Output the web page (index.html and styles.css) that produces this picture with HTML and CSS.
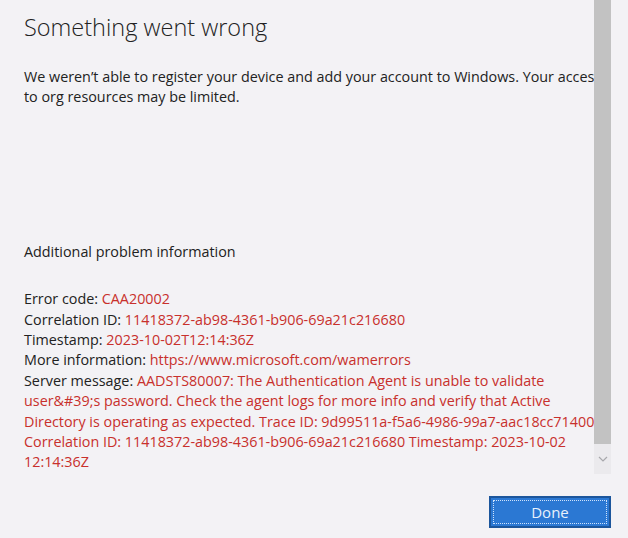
FILE: index.html
```html
<!DOCTYPE html>
<html lang="en">
  <head>
    <meta charset="UTF-8" />
    <meta name="viewport" content="width=device-width, initial-scale=1.0" />
    <title>Something went wrong</title>
    <link rel="stylesheet" href="styles.css">
  </head>
  <body>
    <div class="dialog">
      <div class="scroll-area">
        <div class="content">
          <h1 class="title">Something went wrong</h1>
          <p class="message">
            We weren’t able to register your device and add your account to Windows. Your access<br />
            to org resources may be limited.
          </p>

          <p class="section-title">Additional problem information</p>

          <div class="details">
            <div>Error code: <span class="value">CAA20002</span></div>
            <div>Correlation ID: <span class="value">11418372-ab98-4361-b906-69a21c216680</span></div>
            <div>Timestamp: <span class="value">2023-10-02T12:14:36Z</span></div>
            <div>More information: <span class="value">https://www.microsoft.com/wamerrors</span></div>
            <div>Server message: <span class="value">AADSTS80007: The Authentication Agent is unable to validate<br />
              user&amp;#39;s password. Check the agent logs for more info and verify that Active<br />
              Directory is operating as expected. Trace ID: 9d99511a-f5a6-4986-99a7-aac18cc71400<br />
              Correlation ID: 11418372-ab98-4361-b906-69a21c216680 Timestamp: 2023-10-02<br />
              12:14:36Z</span></div>
          </div>
        </div>

        <!-- fake scrollbar, sits over the text like the real one -->
        <div class="scrollbar">
          <div class="thumb"></div>
          <div class="arrow">
            <svg width="10" height="6" viewBox="0 0 10 6">
              <path d="M1 1 L5 5 L9 1" fill="none" stroke="#a8a8ac" stroke-width="1.2" />
            </svg>
          </div>
        </div>
      </div>

      <div class="footer">
        <button class="done-btn">Done</button>
      </div>
    </div>
  </body>
</html>
```

FILE: styles.css
```css
body {
  margin: 0;
  background: #f3f2f5;
  font-family: "Open Sans", "Noto Sans", sans-serif;
  color: #222222;
}

.dialog {
  width: 628px;
  height: 538px;
}

.scroll-area {
  position: relative;
  height: 474px;
  overflow: hidden;
}

.content {
  padding: 10px 0 0 24px;
  font-size: 14.35px;
  line-height: 20.4px;
  white-space: nowrap;
}

.title {
  font-size: 23.5px;
  font-weight: 300;
  line-height: 34px;
  margin: 0 0 23px 0;
}

.message {
  margin: 0;
}

.section-title {
  margin: 134px 0 0 0;
}

.details {
  margin-top: 27px;
}

.value {
  color: #c8302c;
}

.scrollbar {
  position: absolute;
  top: 0;
  left: 594px;
  width: 17px;
  height: 474px;
  background: #ebeaed;
  display: flex;
  flex-direction: column;
}

.thumb {
  height: 444px;
  background: #c2c2c2;
}

.arrow {
  flex: 1;
  display: flex;
  align-items: center;
  justify-content: center;
}

.footer {
  display: flex;
  justify-content: flex-end;
  padding: 22px 17px 0 0;
}

.done-btn {
  width: 122px;
  height: 32px;
  background: #2b78d3;
  border: 2px solid #1c569c;
  outline: 1px dotted #cfe3fb;
  outline-offset: -5px;
  color: #e8f1fc;
  font-family: "Open Sans", "Noto Sans", sans-serif;
  font-size: 15px;
}
```
